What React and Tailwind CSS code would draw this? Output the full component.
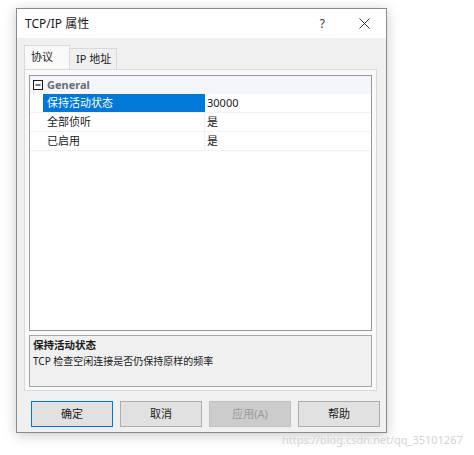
const FONT = "font-['Noto_Sans','Noto_Sans_CJK_SC',sans-serif]";

const ROWS = [
  { label: "保持活动状态", value: "30000", selected: true },
  { label: "全部侦听", value: "是" },
  { label: "已启用", value: "是" },
];

const BUTTONS = [
  { label: "确定", kind: "default" },
  { label: "取消" },
  { label: "应用(A)", kind: "disabled" },
  { label: "帮助" },
];

function CollapseBox() {
  return (
    <svg width="10" height="10" viewBox="0 0 10 10" className="shrink-0">
      <rect x="0.5" y="0.5" width="9" height="9" fill="white" stroke="#1a1a1a" />
      <path d="M2.5 5h5" stroke="#1a1a1a" strokeWidth="1.2" />
    </svg>
  );
}

function TitleBar() {
  return (
    <div className="flex h-[29px] items-center bg-white pl-[8px] pr-[16px]">
      <span className="text-[12px] text-[#1a1a1a]">TCP/IP 属性</span>
      <span className="ml-auto mr-[34px] text-[12px] text-[#333]">?</span>
      <svg width="11" height="11" viewBox="0 0 11 11">
        <path d="M0.5 0.5l10 10M10.5 0.5l-10 10" stroke="#333" strokeWidth="1" />
      </svg>
    </div>
  );
}

function Tabs() {
  return (
    <div className="flex h-[24px] items-end pl-[7px]">
      <div className="flex h-[24px] w-[46px] items-center border border-b-0 border-[#d9d9d9] bg-[#f9f9f9] pl-[6px] text-[11px] text-[#1a1a1a]">
        协议
      </div>
      <div className="flex h-[21px] w-[47px] items-center border-t border-r border-[#d9d9d9] bg-[#f0f0f0] pl-[6px] text-[11px] text-[#1a1a1a]">
        IP 地址
      </div>
    </div>
  );
}

function PropertyGrid() {
  return (
    <div className="flex h-[256px] flex-col border border-[#9a9a9a] bg-white">
      <div className="flex h-[18px] items-center bg-[#f3f6fb]">
        <div className="flex w-[13px] justify-center pl-[2px]">
          <CollapseBox />
        </div>
        <span className="pl-[4px] text-[11px] font-bold text-[#6d6d6d]">General</span>
      </div>
      {ROWS.map(({ label, value, selected }) => (
        <div key={label} className="flex h-[19px] border-b border-[#f2f2f2]">
          <div className="w-[13px]" />
          <div
            className={
              selected
                ? "flex w-[162px] items-center bg-[#0078d7] pl-[4px] text-[11px] text-white"
                : "flex w-[162px] items-center border-r border-[#f0f0f0] pl-[4px] text-[11px] text-[#1a1a1a]"
            }
          >
            {label}
          </div>
          <div className="flex items-center pl-[2px] text-[11px] text-[#1a1a1a]">{value}</div>
        </div>
      ))}
    </div>
  );
}

function Description() {
  return (
    <div className="mt-[4px] flex h-[52px] flex-col border border-[#a5a5a5] bg-[#f0f0f0] pl-[3px] pt-[1px]">
      <span className="text-[10.5px] font-bold leading-[16px] text-[#1a1a1a]">保持活动状态</span>
      <span className="text-[10px] leading-[16px] text-[#1a1a1a]">TCP 检查空闲连接是否仍保持原样的频率</span>
    </div>
  );
}

function DialogButton({ label, kind }) {
  let cls = "border-[#adadad] bg-[#e1e1e1] text-[#1a1a1a]";
  if (kind === "default") cls = "border-[#0078d7] bg-[#e1e1e1] text-[#1a1a1a]";
  if (kind === "disabled") cls = "border-[#bfbfbf] bg-[#cccccc] text-[#9a9a9a]";
  return (
    <div className={`flex h-[26px] w-[82px] items-center justify-center border text-[11px] ${cls}`}>
      {label}
    </div>
  );
}

export default function App() {
  return (
    <div className={`relative min-h-[455px] bg-white pl-[16px] pt-[8px] ${FONT}`}>
      <div className="flex h-[425px] w-[371px] flex-col border border-[#8a8a8a] bg-[#f0f0f0] shadow-[0_2px_12px_rgba(0,0,0,0.22)]">
        <TitleBar />
        <div className="flex flex-1 flex-col pt-[7px]">
          <Tabs />
          <div className="ml-[7px] mr-[9px] flex h-[322px] flex-col border border-[#d9d9d9] bg-[#f9f9f9] px-[4px] pt-[5px]">
            <PropertyGrid />
            <Description />
          </div>
          <div className="mt-[10px] flex gap-[7px] pl-[14px]">
            {BUTTONS.map((b) => (
              <DialogButton key={b.label} {...b} />
            ))}
          </div>
        </div>
      </div>
      <span className="absolute left-[282px] top-[432px] whitespace-nowrap text-[11px] text-[#d4d4d4]">
        https://blog.csdn.net/qq_35101267
      </span>
    </div>
  );
}
